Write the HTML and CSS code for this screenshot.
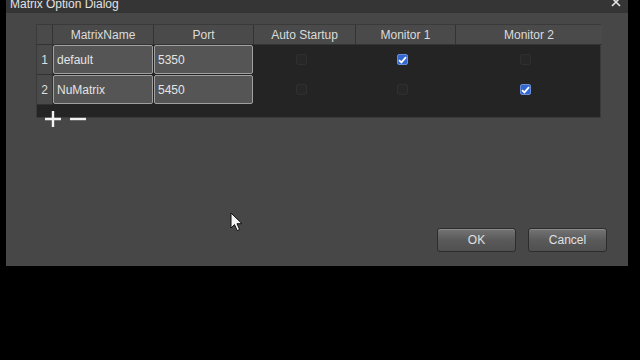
FILE: index.html
```html
<!DOCTYPE html>
<html>
<head>
<meta charset="utf-8">
<link rel="stylesheet" href="styles.css">
</head>
<body>
<div class="dialog">
  <div class="titlebar">
    <span class="title">Matrix Option Dialog</span>
    <span class="close">
      <svg width="10" height="10" viewBox="0 0 10 10"><path d="M1 1L9 9M9 1L1 9" stroke="#e6e6e6" stroke-width="1.6" fill="none"/></svg>
    </span>
  </div>
  <div class="content">
    <div class="grid">
      <div class="hcell corner"></div>
      <div class="hcell">MatrixName</div>
      <div class="hcell">Port</div>
      <div class="hcell">Auto Startup</div>
      <div class="hcell">Monitor 1</div>
      <div class="hcell last">Monitor 2</div>

      <div class="num">1</div>
      <div class="cell"><div class="edit">default</div></div>
      <div class="cell"><div class="edit">5350</div></div>
      <div class="cell check-cell"><span class="cb"></span></div>
      <div class="cell check-cell"><span class="cb on"><svg width="9" height="8" viewBox="0 0 9 8"><path d="M1 4.2L3.4 6.4L8 1.2" stroke="#fff" stroke-width="1.8" fill="none"/></svg></span></div>
      <div class="cell check-cell"><span class="cb"></span></div>

      <div class="num">2</div>
      <div class="cell"><div class="edit">NuMatrix</div></div>
      <div class="cell"><div class="edit">5450</div></div>
      <div class="cell check-cell"><span class="cb"></span></div>
      <div class="cell check-cell"><span class="cb"></span></div>
      <div class="cell check-cell"><span class="cb on"><svg width="9" height="8" viewBox="0 0 9 8"><path d="M1 4.2L3.4 6.4L8 1.2" stroke="#fff" stroke-width="1.8" fill="none"/></svg></span></div>
    </div>
    <div class="tools">
      <svg class="plus" width="18" height="18" viewBox="0 0 18 18"><path d="M9 1V17M1 9H17" stroke="#f2f2f2" stroke-width="2.4" fill="none"/></svg>
      <svg class="minus" width="18" height="18" viewBox="0 0 18 18"><path d="M1 9H17" stroke="#f2f2f2" stroke-width="2.4" fill="none"/></svg>
    </div>
    <div class="buttons">
      <button class="btn">OK</button>
      <button class="btn">Cancel</button>
    </div>
  </div>
  <svg class="cursor" width="14" height="20" viewBox="0 0 14 20"><path d="M1 1V16L4.5 12.6L7.2 18.6L9.6 17.5L7 11.7H12Z" fill="#f4f4f4" stroke="#111" stroke-width="1"/></svg>
</div>
</body>
</html>
```
FILE: styles.css
```css
html, body {
  margin: 0;
  padding: 0;
  background: #000;
  width: 640px;
  height: 360px;
  overflow: hidden;
  font-family: "Liberation Sans", Arial, sans-serif;
}
.dialog {
  position: relative;
  margin-top: -7px;
  margin-left: 6px;
  width: 622px;
  height: 273px;
  background: #474747;
  display: flex;
  flex-direction: column;
}
.titlebar {
  height: 20px;
  background: #353535;
  display: flex;
  align-items: center;
  justify-content: space-between;
  padding: 0 7px 0 4px;
  box-sizing: border-box;
}
.title {
  color: #e2e2e2;
  font-size: 12px;
  padding-top: 1px;
}
.close {
  display: flex;
  margin-top: -2px;
}
.content {
  flex: 1;
  display: flex;
  flex-direction: column;
  padding: 11px 0 14px 30px;
}
.grid {
  width: 565px;
  height: 94px;
  display: grid;
  grid-template-columns: 16px 101px 100px 102px 100px 146px;
  grid-template-rows: 20px 30px 30px;
  align-content: start;
  background: #242424;
  border: 1px solid #3a3a3a;
  box-sizing: border-box;
}
.hcell {
  background: #4a4a4a;
  color: #dcdcdc;
  font-size: 12px;
  display: flex;
  align-items: center;
  justify-content: center;
  border-right: 1px solid #333;
  border-bottom: 1px solid #333;
}
.hcell.last { border-right: none; }
.num {
  background: #4a4a4a;
  color: #dedede;
  font-size: 12px;
  display: flex;
  align-items: center;
  justify-content: center;
  border-right: 1px solid #333;
  border-bottom: 1px solid #333;
}
.cell {
  display: flex;
  align-items: stretch;
}
.edit {
  flex: 1;
  margin: 0 1px 1px 0;
  background: #555;
  border: 1px solid #a0a0a0;
  border-radius: 2px;
  color: #e4e4e4;
  font-size: 12px;
  display: flex;
  align-items: center;
  padding-left: 3px;
}
.check-cell {
  align-items: center;
  justify-content: center;
  padding-right: 8px;
  padding-bottom: 1px;
}
.cb {
  width: 11px;
  height: 11px;
  box-sizing: border-box;
  background: #272727;
  border: 1px solid #2f2f2f;
  border-radius: 2px;
  display: flex;
  align-items: center;
  justify-content: center;
}
.cb.on {
  background: #3266d0;
  border-color: #6b8ed8;
}
.tools {
  display: flex;
  align-items: center;
  gap: 7px;
  margin-top: -8px;
  margin-left: 8px;
  height: 18px;
}
.buttons {
  margin-top: auto;
  display: flex;
  justify-content: flex-end;
  gap: 12px;
  padding-right: 21px;
}
.btn {
  width: 79px;
  height: 24px;
  border: 1px solid #2c2c2c;
  border-radius: 3px;
  background: linear-gradient(#747474, #5a5a5a 50%, #505050);
  color: #e0e0e0;
  font-family: "Liberation Sans", Arial, sans-serif;
  font-size: 12px;
  padding: 0;
  box-shadow: inset 0 1px 0 #8a8a8a;
}
.cursor {
  position: absolute;
  left: 224px;
  top: 219px;
}
```
